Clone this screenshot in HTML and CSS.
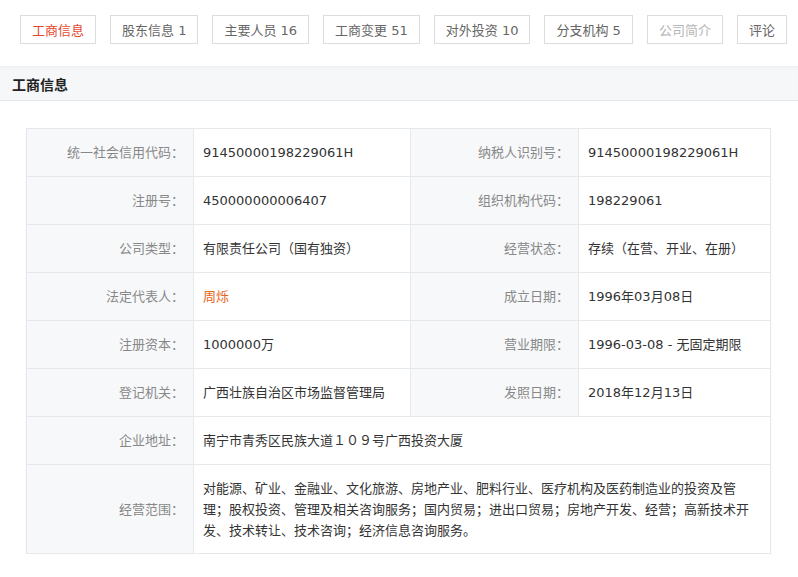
FILE: index.html
```html
<!DOCTYPE html>
<html lang="zh-CN">
<head>
  <meta charset="UTF-8" />
  <title>工商信息</title>
  <link rel="stylesheet" href="styles.css">
</head>
<body>
<main>
  <!-- Tabs -->
  <nav class="tabs">
    <a class="tab active">工商信息</a>
    <a class="tab">股东信息 1</a>
    <a class="tab">主要人员 16</a>
    <a class="tab">工商变更 51</a>
    <a class="tab">对外投资 10</a>
    <a class="tab">分支机构 5</a>
    <a class="tab disabled">公司简介</a>
    <a class="tab">评论</a>
  </nav>

  <!-- Section -->
  <div class="section-head">工商信息</div>
  <div class="section-body">
    <table class="info-table">
      <colgroup>
        <col class="c-label"><col class="c-val1"><col class="c-label2"><col class="c-val2">
      </colgroup>
      <tr>
        <th>统一社会信用代码：</th><td>91450000198229061H</td>
        <th>纳税人识别号：</th><td>91450000198229061H</td>
      </tr>
      <tr>
        <th>注册号：</th><td>450000000006407</td>
        <th>组织机构代码：</th><td>198229061</td>
      </tr>
      <tr>
        <th>公司类型：</th><td>有限责任公司（国有独资）</td>
        <th>经营状态：</th><td>存续（在营、开业、在册）</td>
      </tr>
      <tr>
        <th>法定代表人：</th><td><a class="person">周烁</a></td>
        <th>成立日期：</th><td>1996年03月08日</td>
      </tr>
      <tr>
        <th>注册资本：</th><td>1000000万</td>
        <th>营业期限：</th><td>1996-03-08 - 无固定期限</td>
      </tr>
      <tr>
        <th>登记机关：</th><td>广西壮族自治区市场监督管理局</td>
        <th>发照日期：</th><td>2018年12月13日</td>
      </tr>
      <tr>
        <th>企业地址：</th><td colspan="3">南宁市青秀区民族大道１０９号广西投资大厦</td>
      </tr>
      <tr class="scope">
        <th>经营范围：</th>
        <td colspan="3">对能源、矿业、金融业、文化旅游、房地产业、肥料行业、医疗机构及医药制造业的投资及管理；股权投资、管理及相关咨询服务；国内贸易；进出口贸易；房地产开发、经营；高新技术开发、技术转让、技术咨询；经济信息咨询服务。</td>
      </tr>
    </table>
  </div>
</main>
</body>
</html>
```

FILE: styles.css
```css
* { box-sizing: border-box; margin: 0; padding: 0; }
body {
  background: #fff;
  font-family: "DejaVu Sans", "Noto Sans CJK SC", sans-serif;
  font-size: 13px;
  color: #333;
}
.tabs {
  display: flex; gap: 14px;
  padding: 15px 0 0 20px;
}
.tab {
  display: flex; align-items: center; flex-shrink: 0;
  white-space: nowrap;
  height: 29px; padding: 0 11px;
  border: 1px solid #dcdcdc;
  color: #666; cursor: pointer;
}
.tab.active { color: #e4472e; }
.tab.disabled { color: #b5b5b5; }

.section-head {
  margin-top: 22px;
  height: 35px;
  padding-left: 12px;
  display: flex; align-items: center;
  background: #f6f7f9;
  border-top: 1px solid #eef0f2;
  border-bottom: 1px solid #e6e8eb;
  box-shadow: inset 0 2px 2px rgba(0,0,0,0.02);
  font-size: 14px; font-weight: bold; color: #222;
}
.section-body { padding: 27px 0 0 26px; }

.info-table {
  width: 744px;
  border-collapse: collapse;
  table-layout: fixed;
  box-shadow: 0 1px 2px rgba(0,0,0,0.05);
}
.c-label { width: 167px; }
.c-val1 { width: 217px; }
.c-label2 { width: 168px; }
.c-val2 { width: 192px; }
.info-table th, .info-table td {
  height: 48px;
  border: 1px solid #e6e9ec;
  font-weight: normal;
  line-height: 21px;
}
.info-table th {
  background: #f7f8fa;
  color: #888;
  text-align: right;
  padding: 0 9px 0 0;
}
.info-table td {
  color: #333;
  text-align: left;
  padding: 0 12px 0 9px;
}
.info-table .scope th, .info-table .scope td { height: 89px; }
.person { color: #e8631c; cursor: pointer; }
```
